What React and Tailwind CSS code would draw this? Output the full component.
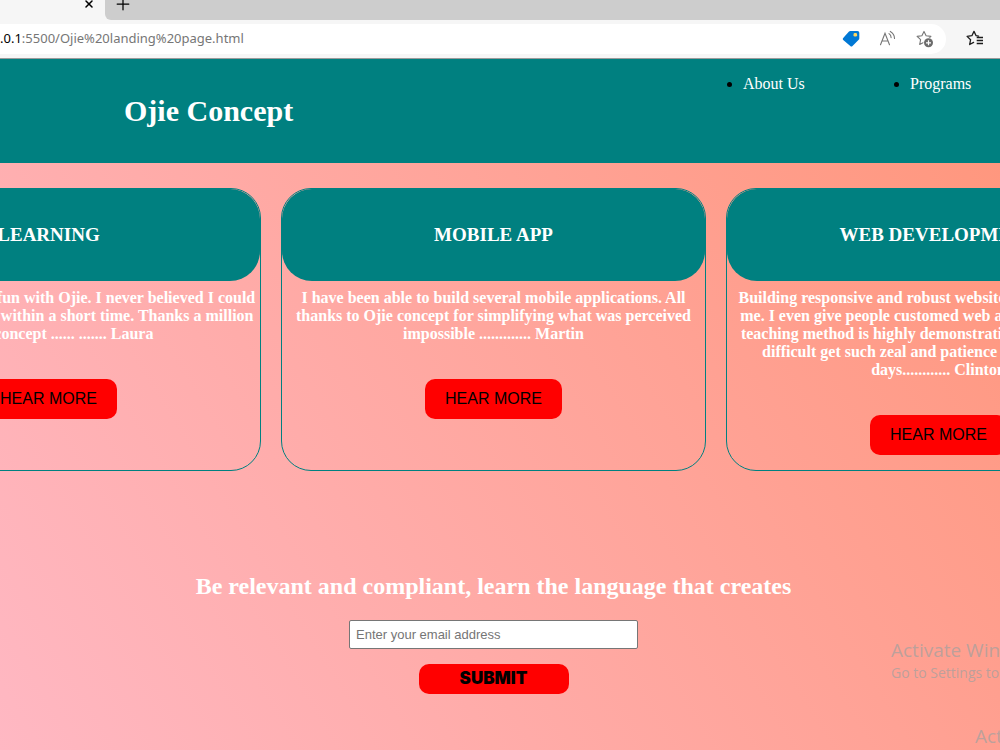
import React from 'react';
import { Plus, X } from 'lucide-react';

const navLinks = ['About Us', 'Programs', 'Contact'];

const cards = [
  {
    title: 'LEARNING',
    lines: [
      'Learning to code is all fun with Ojie. I never believed I could',
      'build lovely web pages within a short time. Thanks a million',
      'to Ojie concept ...... ....... Laura',
    ],
  },
  {
    title: 'MOBILE APP',
    lines: [
      'I have been able to build several mobile applications. All',
      'thanks to Ojie concept for simplifying what was perceived',
      'impossible ............. Martin',
    ],
  },
  {
    title: 'WEB DEVELOPMENT',
    lines: [
      'Building responsive and robust websites is now simpler for',
      'me. I even give people customed web applications too. The',
      'teaching method is highly demonstrative and it is not very',
      'difficult get such zeal and patience with tutors these',
      'days............ Clinton',
    ],
  },
];

const TagIcon = () => (
  <svg className="h-[18px] w-[18px]" viewBox="0 0 18 18">
    <path d="M8.3 1h7.2a1.8 1.8 0 0 1 1.8 1.8v5.6a2 2 0 0 1-.6 1.4l-6.2 6.3a1.6 1.6 0 0 1-2.2 0L1.2 10a1.4 1.4 0 0 1 0-2L7 1.6A2 2 0 0 1 8.3 1z" fill="#0078d4" />
    <rect x="11.5" y="3" width="3.6" height="3.6" rx="1.4" fill="#ffd75e" />
  </svg>
);

const ReadAloudIcon = () => (
  <svg className="h-[18px] w-[18px]" viewBox="0 0 18 18" fill="none" stroke="#767676" strokeWidth="1.1" strokeLinecap="round">
    <path d="M1.5 14.8 6 3.3l4.5 11.5M3 11h6" />
    <path d="M10 3.6c1.4.9 2.1 2.2 2.1 4M11.3 1.4c2.6 1.5 4.2 4 4.2 7" />
  </svg>
);

const AddFavoriteIcon = () => (
  <svg className="h-[18px] w-[18px]" viewBox="0 0 18 18" fill="none">
    <path d="M8 1.4 10.1 5.7 14.9 6.4 11.4 9.7 12.3 14.5 8 12.2 3.7 14.5 4.6 9.7 1.1 6.4 5.9 5.7z" stroke="#767676" strokeWidth="1.1" strokeLinejoin="round" />
    <circle cx="12.5" cy="12.8" r="5.2" fill="#fff" />
    <circle cx="12.5" cy="12.8" r="4.5" fill="#6b6b6b" />
    <path d="M12.5 10.3v5M10 12.8h5" stroke="#fff" strokeWidth="1.2" />
  </svg>
);

const FavoritesIcon = () => (
  <svg className="h-[18px] w-[18px]" viewBox="0 0 18 18" fill="none" stroke="#1b1b1b" strokeWidth="1.3" strokeLinecap="round" strokeLinejoin="round">
    <path d="M12.6 6.1 10.1 5.7 8 1.4 5.9 5.7 1.1 6.4 4.6 9.7 3.7 14.5 7.6 12.4" />
    <path d="M10.7 7.5H17M10.7 10.5H17M10.7 13.5H17" strokeLinecap="butt" />
  </svg>
);

const BrowserBar = () => (
  <div className="bg-[#f6f6f6] border-b border-[#9a9a9a] font-['Noto_Sans',sans-serif]">
    <div className="flex h-5">
      <div className="w-[105px] flex justify-end pr-2">
        <button aria-label="Close tab" className="-mt-3 h-8 w-4 flex items-center justify-center">
          <X className="h-3 w-3" strokeWidth={3} />
        </button>
      </div>
      <div className="flex-1 bg-[#cdcdcd] rounded-bl-md pl-2">
        <button aria-label="New tab" className="-mt-3 h-8 w-5 flex items-center justify-center">
          <Plus className="h-5 w-5" strokeWidth={1.5} />
        </button>
      </div>
    </div>
    <div className="flex items-center pt-1 pb-1 pr-4">
      <div className="flex-1 h-[30px] flex items-center bg-white rounded-r-full pr-3">
        <p className="flex-1 text-[13px] text-[#767676] whitespace-nowrap">
          <span className="text-black">.0.1</span>:5500/Ojie%20landing%20page.html
        </p>
        <div className="flex gap-[19px]">
          <button aria-label="Shopping"><TagIcon /></button>
          <button aria-label="Read aloud"><ReadAloudIcon /></button>
          <button aria-label="Add to favorites"><AddFavoriteIcon /></button>
        </div>
      </div>
      <button aria-label="Favorites" className="ml-5"><FavoritesIcon /></button>
    </div>
  </div>
);

const Header = () => (
  <header className="flex justify-between h-[104px] bg-[#008080] text-white overflow-hidden">
    <h1 className="pl-[124px] pt-[34px] text-[30px] leading-9 font-bold">Ojie Concept</h1>
    <ul className="flex w-[257px] pt-4 shrink-0 list-disc">
      {navLinks.map((name) => (
        <li key={name} className="w-[167px] shrink-0 text-base leading-[18px] marker:text-black">
          <a href="#">{name}</a>
        </li>
      ))}
    </ul>
  </header>
);

const Card = ({ title, lines }) => (
  <article className="w-[425px] shrink-0 border border-[#008080] rounded-[30px] text-center text-white font-bold pb-[15px]">
    <h3 className="h-[92px] flex items-center justify-center bg-[#008080] rounded-[30px] text-[19px]">{title}</h3>
    <p className="mt-2 text-base leading-[18px]">
      {lines.map((line) => (
        <span key={line} className="block whitespace-nowrap">{line}</span>
      ))}
    </p>
    <button className="mt-9 h-10 px-5 bg-[#ff0000] rounded-[10px] text-black text-base font-normal font-['Liberation_Sans',sans-serif]">
      HEAR MORE
    </button>
  </article>
);

const Watermark = () => (
  <div className="absolute left-[891px] top-[638px] whitespace-nowrap text-[#a0a0a0]/70 font-['Open_Sans',sans-serif]">
    <p className="text-[19px] leading-6">Activate Windows</p>
    <p className="text-sm leading-[22px]">Go to Settings to activate Windows.</p>
    <p className="pl-[84px] pt-10 text-[19px] leading-6">Activate Windows</p>
  </div>
);

export default function App() {
  return (
    <div className="relative min-h-screen flex flex-col overflow-hidden font-['Liberation_Serif',serif]">
      <BrowserBar />
      <Header />
      <main className="flex-1 bg-[linear-gradient(58deg,#ffb8c3,#ff977e)] pt-[25px] pr-[13px]">
        <section className="flex justify-center gap-5">
          {cards.map((card) => (
            <Card key={card.title} {...card} />
          ))}
        </section>
        <form className="mt-[101px] flex flex-col items-center" onSubmit={(e) => e.preventDefault()}>
          <h2 className="text-2xl leading-7 font-bold text-white">
            Be relevant and compliant, learn the language that creates
          </h2>
          <input
            type="email"
            aria-label="Email address"
            placeholder="Enter your email address"
            className="mt-5 h-[29px] w-[289px] px-1.5 bg-white border border-[#767676] rounded-xs text-[13px] placeholder:text-[#757575] font-['Liberation_Sans',sans-serif]"
          />
          <button className="mt-[15px] h-[30px] w-[150px] bg-[#ff0000] rounded-[10px] text-black text-[17px] font-black font-['Inter',sans-serif]">
            SUBMIT
          </button>
        </form>
      </main>
      <Watermark />
    </div>
  );
}
